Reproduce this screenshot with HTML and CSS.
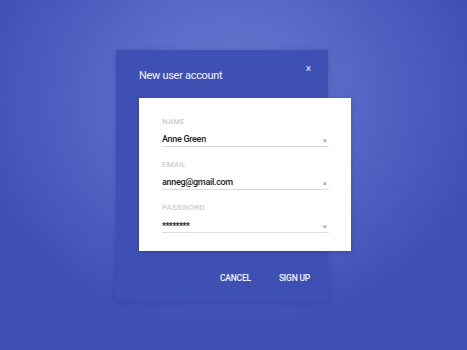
FILE: index.html
```html
<!DOCTYPE html>
<html lang="en">
<head>
  <meta charset="UTF-8" />
  <meta name="viewport" content="width=device-width, initial-scale=1" />
  <title>New user account</title>
  <link rel="stylesheet" href="styles.css">
</head>
<body>
  <div class="dialog">
    <div class="dialog-head">
      <h1>New user account</h1>
      <button class="close">&times;</button>
    </div>

    <div class="card">
      <div class="field">
        <label>Name</label>
        <div class="row"><span class="value">Anne Green</span><span class="clear">&times;</span></div>
      </div>
      <div class="field">
        <label>Email</label>
        <div class="row"><span class="value">anneg@gmail.com</span><span class="clear">&times;</span></div>
      </div>
      <div class="field">
        <label>Password</label>
        <div class="row"><span class="value pw">********</span><span class="clear">&times;</span></div>
      </div>
    </div>

    <div class="actions">
      <button>Cancel</button>
      <button>Sign up</button>
    </div>
  </div>
</body>
</html>
```

FILE: styles.css
```css
* { box-sizing: border-box; }
html, body {
  margin: 0;
  height: 100%;
}
body {
  font-family: Roboto, "Liberation Sans", sans-serif;
  background: radial-gradient(ellipse 260px 230px at 230px 100px, #6b7cd1 0%, #5768c7 45%, #3f4fb4 100%);
  background-color: #3f4fb4;
  padding: 50px 0 0 116px;
}
.dialog {
  width: 212px;
  height: 251px;
  background: #3f50b5;
  box-shadow: 0 1px 6px rgba(20, 30, 100, 0.25);
  padding: 0 0 0 23px;
  display: flex;
  flex-direction: column;
}
.dialog-head {
  display: flex;
  justify-content: space-between;
  align-items: flex-start;
  height: 48px;
  padding-top: 18px;
  padding-right: 17px;
}
.dialog-head h1 {
  margin: 0;
  font-size: 11px;
  font-weight: 400;
  line-height: 16px;
  letter-spacing: -0.3px;
  color: #f1f3fb;
}
.close {
  background: none;
  border: none;
  padding: 0;
  margin-top: -6px;
  color: #e6e9f7;
  font-size: 10px;
  line-height: 14px;
  font-family: inherit;
  cursor: pointer;
}
.card {
  width: 212px;
  height: 153px;
  background: #fff;
  box-shadow: 0 1px 4px rgba(20, 30, 90, 0.25);
  padding: 19px 22px 0 23px;
}
.field {
  margin-bottom: 13px;
}
.field label {
  display: block;
  font-size: 8px;
  line-height: 10px;
  color: #c2c2c2;
  text-transform: uppercase;
  letter-spacing: 0.1px;
}
.row {
  margin-top: 7px;
  display: flex;
  justify-content: space-between;
  align-items: center;
  line-height: 11px;
  padding-bottom: 1px;
  border-bottom: 1px solid #dcdcdc;
}
.value {
  font-size: 9px;
  font-weight: 500;
  letter-spacing: -0.3px;
  color: #222;
}
.value.pw {
  font-size: 9px;
  font-weight: 700;
  letter-spacing: -0.7px;
  position: relative;
  top: 1px;
}
.clear {
  font-size: 8px;
  color: #8c8c8c;
  margin-right: 2px;
  position: relative;
  top: 1px;
}
.actions {
  flex: 1;
  display: flex;
  justify-content: flex-end;
  align-items: center;
  gap: 28px;
  padding: 4px 18px 0 0;
}
.actions button {
  background: none;
  border: none;
  padding: 0;
  color: #f4f5fb;
  font-family: inherit;
  font-size: 8.5px;
  font-weight: 500;
  letter-spacing: -0.2px;
  text-transform: uppercase;
  cursor: pointer;
}
```
